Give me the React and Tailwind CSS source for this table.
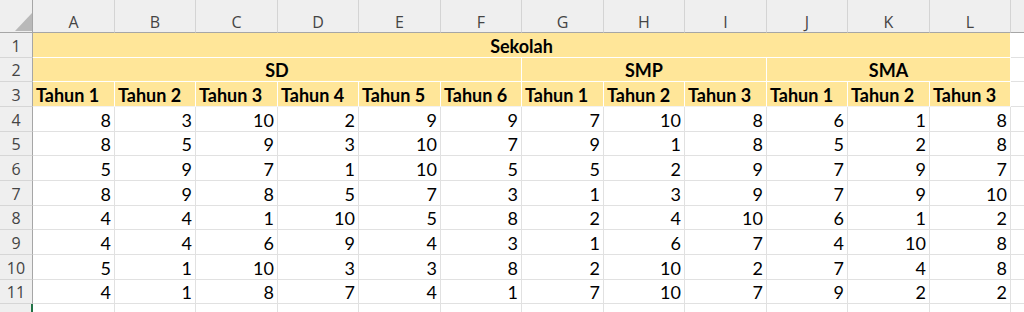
import React from 'react';

const cols = ['A', 'B', 'C', 'D', 'E', 'F', 'G', 'H', 'I', 'J', 'K', 'L'];

const data = [
    [8, 3, 10, 2, 9, 9, 7, 10, 8, 6, 1, 8],
    [8, 5, 9, 3, 10, 7, 9, 1, 8, 5, 2, 8],
    [5, 9, 7, 1, 10, 5, 5, 2, 9, 7, 9, 7],
    [8, 9, 8, 5, 7, 3, 1, 3, 9, 7, 9, 10],
    [4, 4, 1, 10, 5, 8, 2, 4, 10, 6, 1, 2],
    [4, 4, 6, 9, 4, 3, 1, 6, 7, 4, 10, 8],
    [5, 1, 10, 3, 3, 8, 2, 10, 2, 7, 4, 8],
    [4, 1, 8, 7, 4, 1, 7, 10, 7, 9, 2, 2],
];

const tahun = [1, 2, 3, 4, 5, 6, 1, 2, 3, 1, 2, 3];

const cellFont = { fontFamily: 'Lato, "Liberation Sans", sans-serif' };
const headFont = { fontFamily: '"Open Sans", "Liberation Sans", sans-serif' };

// row header cell (the gray numbers on the left)
const RowHead = ({ n }) => (
    <div
        className="flex items-end justify-center bg-[#efefef] border-r border-b border-r-[#a6a6a6] border-b-[#d6d6d6] text-[16px] leading-[20px] text-[#444] pb-px"
        style={headFont}
    >
        {n}
    </div>
);

export default function App() {
    return (
        <div
            className="w-[1024px] h-[312px] overflow-hidden bg-white grid grid-cols-[33px_82px_81px_82px_81px_82px_81px_82px_81px_82px_81px_82px_81px_1fr] grid-rows-[33px_25px_24px_25px_25px_24px_25px_25px_24px_25px_25px_24px_1fr] text-black"
            style={cellFont}
        >
            {/* corner */}
            <div className="relative bg-[#efefef] border-r border-b border-r-[#a6a6a6] border-b-[#a6a6a6]">
                <svg className="absolute left-[15px] top-[13px]" width="17" height="18" viewBox="0 0 17 18">
                    <polygon points="17,0 17,18 0,18" fill="#b9b9b9" />
                </svg>
            </div>

            {/* column letters */}
            {cols.map((c) => (
                <div
                    key={c}
                    className="flex items-end justify-center bg-[#efefef] border-r border-b border-r-[#d4d4d4] border-b-[#a6a6a6] text-[16px] leading-[20px] text-[#444]"
                    style={headFont}
                >
                    {c}
                </div>
            ))}
            <div className="bg-[#efefef] border-b border-b-[#a6a6a6]" />

            {/* row 1 */}
            <RowHead n={1} />
            <div className="col-span-12 flex items-end justify-center bg-[#ffe699] border-r border-b border-white font-bold text-[18px] leading-[20px] pb-px">
                Sekolah
            </div>
            <div className="border-b border-[#e1e1e1]" />

            {/* row 2 */}
            <RowHead n={2} />
            <div className="col-span-6 flex items-end justify-center bg-[#ffe699] border-r border-b border-white font-bold text-[18px] leading-[20px] pb-px">
                SD
            </div>
            <div className="col-span-3 flex items-end justify-center bg-[#ffe699] border-r border-b border-white font-bold text-[18px] leading-[20px] pb-px">
                SMP
            </div>
            <div className="col-span-3 flex items-end justify-center bg-[#ffe699] border-r border-b border-white font-bold text-[18px] leading-[20px] pb-px">
                SMA
            </div>
            <div className="border-b border-[#e1e1e1]" />

            {/* row 3 */}
            <RowHead n={3} />
            {tahun.map((t, i) => (
                <div
                    key={i}
                    className="flex items-end bg-[#ffe699] border-r border-b border-r-white border-b-[#f2f2f2] font-bold text-[18px] leading-[20px] pl-[3px] pb-px whitespace-nowrap"
                >
                    Tahun {t}
                </div>
            ))}
            <div className="border-b border-[#e1e1e1]" />

            {/* data rows */}
            {data.map((row, r) => (
                <React.Fragment key={r}>
                    <RowHead n={r + 4} />
                    {row.map((v, i) => (
                        <div
                            key={i}
                            className="flex items-end justify-end border-r border-b border-[#e1e1e1] text-[18px] leading-[20px] pr-[3px] pb-px"
                        >
                            {v}
                        </div>
                    ))}
                    <div className="border-b border-[#e1e1e1]" />
                </React.Fragment>
            ))}

            {/* row 12, cut off */}
            <div className="bg-[#efefef] border-r-2 border-r-[#217346]" />
            {cols.map((c) => (
                <div key={c} className="border-r border-[#e1e1e1]" />
            ))}
            <div />
        </div>
    );
}
